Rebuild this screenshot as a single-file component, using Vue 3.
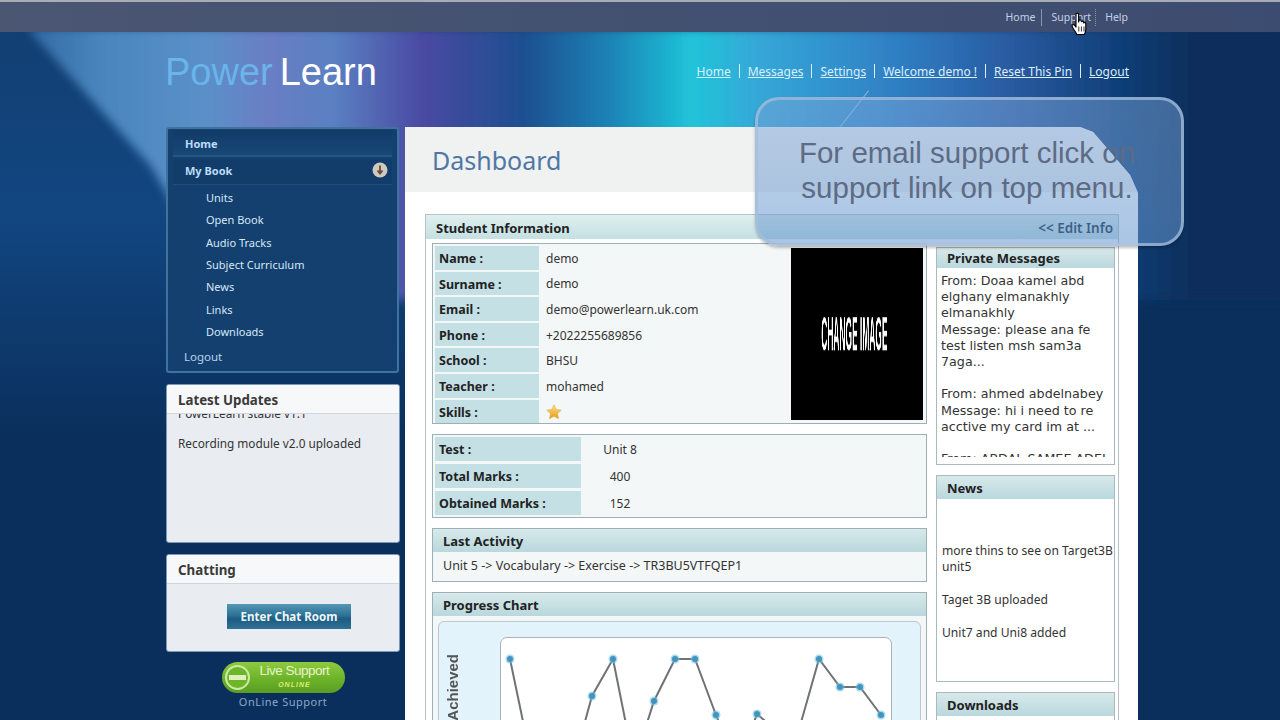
<script setup>
const topLinks = ['Home', 'Support', 'Help']
const mainLinks = ['Home', 'Messages', 'Settings', 'Welcome demo !', 'Reset This Pin', 'Logout']
const bookItems = ['Units', 'Open Book', 'Audio Tracks', 'Subject Curriculum', 'News', 'Links', 'Downloads']

const student = [
  ['Name :', 'demo'],
  ['Surname :', 'demo'],
  ['Email :', 'demo@powerlearn.uk.com'],
  ['Phone :', '+2022255689856'],
  ['School :', 'BHSU'],
  ['Teacher :', 'mohamed'],
]
const marks = [
  ['Test :', 'Unit 8'],
  ['Total Marks :', '400'],
  ['Obtained Marks :', '152'],
]

// chart points, relative to the white plot area
const points = [
  [10, 22], [30, 118], [51, 150], [72, 132], [92, 59], [113, 22], [134, 127], [154, 64], [175, 22], [195, 22],
  [216, 78], [237, 130], [257, 77], [278, 95], [298, 96], [319, 22], [340, 50], [360, 50], [381, 78],
]
const linePoints = points.map(p => p.join(',')).join(' ')
</script>

<template>
  <div class="page">
    <!-- header artwork of the site template -->
    <svg class="art" width="1280" height="720" viewBox="0 0 1280 720">
      <defs>
        <linearGradient id="sky" x1="0" y1="0" x2="1280" y2="0" gradientUnits="userSpaceOnUse">
          <stop offset="0" stop-color="#2a5f9a" />
          <stop offset=".08" stop-color="#4a86be" />
          <stop offset=".16" stop-color="#5a90c8" />
          <stop offset=".21" stop-color="#6a7ec4" />
          <stop offset=".26" stop-color="#5a80c2" />
          <stop offset=".33" stop-color="#4a4aa2" />
          <stop offset=".41" stop-color="#1d4f90" />
          <stop offset=".48" stop-color="#1c86b8" />
          <stop offset=".54" stop-color="#20c4d8" />
          <stop offset=".59" stop-color="#35a8d8" />
          <stop offset=".7" stop-color="#2f7fc4" />
          <stop offset=".79" stop-color="#2a5aa0" />
          <stop offset=".87" stop-color="#11407a" />
          <stop offset=".93" stop-color="#0a2f5c" />
        </linearGradient>
        <linearGradient id="ground" x1="0" y1="30" x2="0" y2="440" gradientUnits="userSpaceOnUse">
          <stop offset="0" stop-color="#123f73" />
          <stop offset=".45" stop-color="#124680" />
          <stop offset="1" stop-color="#0a2f5c" />
        </linearGradient>
        <filter id="soft" x="-5%" y="-5%" width="110%" height="110%">
          <feGaussianBlur stdDeviation="5" />
        </filter>
      </defs>
      <rect width="1280" height="720" fill="#0a2f5c" />
      <rect width="420" height="440" y="30" fill="url(#ground)" />
      <polygon points="27,28 1290,28 1290,300 230,300 150,165" fill="url(#sky)" filter="url(#soft)" />
    </svg>

    <div class="streak"></div>

    <div class="topbar">
      <template v-for="(link, i) in topLinks" :key="link">
        <span v-if="i" class="top-sep" :class="{ dotted: i === 2 }"></span>
        <a class="top-link">{{ link }}</a>
      </template>
    </div>

    <div class="wrap">
      <header class="header">
        <div class="logo"><span class="logo-a">Power</span><span class="logo-b">Learn</span></div>
        <nav class="main-nav">
          <template v-for="(link, i) in mainLinks" :key="link">
            <span v-if="i" class="nav-sep"></span>
            <a class="nav-link">{{ link }}</a>
          </template>
        </nav>
      </header>

      <div class="columns">
        <aside class="sidebar">
          <div class="menu">
            <div class="menu-head home">Home</div>
            <div class="menu-head book">
              My Book
              <span class="arrow">
                <svg width="16" height="16" viewBox="0 0 16 16">
                  <circle cx="8" cy="8" r="7.5" fill="#cfc9c0" />
                  <path d="M8 3.5v8M5.5 8.5 8 11.5l2.5-3" fill="none" stroke="#6b4a36" stroke-width="1.8" />
                </svg>
              </span>
            </div>
            <ul class="sub">
              <li v-for="item in bookItems" :key="item">{{ item }}</li>
            </ul>
            <div class="menu-logout">Logout</div>
          </div>

          <div class="side-card updates">
            <h3>Latest Updates</h3>
            <div class="side-body">
              <p class="cut">PowerLearn stable v1.1</p>
              <p>Recording module v2.0 uploaded</p>
            </div>
          </div>

          <div class="side-card chat">
            <h3>Chatting</h3>
            <div class="chat-body"><button class="chat-btn">Enter Chat Room</button></div>
          </div>

          <div class="live">
            <div class="pill">
              <span class="pill-icon"><i></i></span>
              <span class="pill-text">
                <b>Live Support</b>
                <em>ONLINE</em>
              </span>
            </div>
            <div class="live-cap">OnLine Support</div>
          </div>
        </aside>

        <main class="panel">
          <div class="panel-title"><h1>Dashboard</h1></div>

          <section class="outer">
            <div class="bar outer-bar">
              <span>Student Information</span>
              <a class="edit">&lt;&lt; Edit Info</a>
            </div>
            <div class="outer-cols">
              <div class="left">
                <div class="box info">
                  <div class="info-rows">
                    <div v-for="row in student" :key="row[0]" class="row">
                      <div class="lab">{{ row[0] }}</div>
                      <div class="val">{{ row[1] }}</div>
                    </div>
                    <div class="row">
                      <div class="lab">Skills :</div>
                      <div class="val">
                        <svg width="16" height="16" viewBox="0 0 16 16">
                          <defs>
                            <linearGradient id="star" x1="0" y1="0" x2="0" y2="1">
                              <stop offset="0" stop-color="#ffe27a" />
                              <stop offset="1" stop-color="#e79a1c" />
                            </linearGradient>
                          </defs>
                          <path d="M8 .8l2.2 4.7 5.1.6-3.8 3.5 1 5.1L8 12.2l-4.500 2.500 1-5.100L.7 6.100l5.100-.6z" fill="url(#star)" stroke="#d9a441" stroke-width=".5" />
                        </svg>
                      </div>
                    </div>
                  </div>
                  <div class="photo"><span>CHANGE IMAGE</span></div>
                </div>

                <div class="box marks">
                  <div v-for="row in marks" :key="row[0]" class="row">
                    <div class="lab">{{ row[0] }}</div>
                    <div class="val"><span>{{ row[1] }}</span></div>
                  </div>
                </div>

                <div class="box activity">
                  <div class="bar">Last Activity</div>
                  <div class="activity-text">Unit 5 -&gt; Vocabulary -&gt; Exercise -&gt; TR3BU5VTFQEP1</div>
                </div>

                <div class="box progress">
                  <div class="bar">Progress Chart</div>
                  <div class="chart">
                    <div class="axis">Achieved</div>
                    <div class="plot">
                      <svg width="392" height="200" viewBox="1 1 392 200">
                        <polyline :points="linePoints" fill="none" stroke="#6e7378" stroke-width="2" />
                        <g v-for="p in points" :key="p[0]">
                          <circle :cx="p[0]" :cy="p[1]" r="4.500" fill="#7cc0de" opacity=".6" />
                          <circle :cx="p[0]" :cy="p[1]" r="3" fill="#3f95bf" />
                        </g>
                      </svg>
                    </div>
                  </div>
                </div>
              </div>

              <div class="right">
                <div class="mini messages">
                  <div class="bar">Private Messages</div>
                  <div class="mini-body">
                    From: Doaa kamel abd elghany elmanakhly elmanakhly<br />
                    Message: please ana fe test listen msh sam3a 7aga...<br /><br />
                    From: ahmed abdelnabey<br />
                    Message: hi i need to re acctive my card im at ...<br /><br />
                    From: ABDAL SAMEE ADEL
                  </div>
                </div>
                <div class="mini news">
                  <div class="bar">News</div>
                  <div class="news-body">
                    <p>more thins to see on Target3B unit5</p>
                    <p>Taget 3B uploaded</p>
                    <p>Unit7 and Uni8 added</p>
                  </div>
                </div>
                <div class="mini downloads">
                  <div class="bar">Downloads</div>
                </div>
              </div>
            </div>
          </section>
        </main>
      </div>
    </div>

    <!-- help overlay from the recorded walkthrough -->
    <div class="callout">For email support click on<br />support link on top menu.</div>

    <svg class="cursor" width="18" height="26" viewBox="0 0 18 26">
      <path d="M5 2.500c0-1.800 2.600-1.800 2.600 0V10l.4-1.500c.6-1 2.200-.8 2.300.5l.1.800c.5-1 2.200-.8 2.300.5v.7c.6-.8 2.100-.5 2.100.8v5.400c0 2.500-1 3.500-1.300 5.300H5.700c-.5-2-2-3.500-3.500-6-1-1.600-1.500-3-.8-3.600.8-.7 2-.2 3.600 2.200z" fill="#fff" stroke="#000" stroke-width="1.100" stroke-linejoin="round" />
      <path d="M7.800 14.500v5M10.400 14.500v5M13 14.500v5" stroke="#000" stroke-width=".8" fill="none" />
    </svg>
  </div>
</template>

<style>
html, body {
  margin: 0;
  background: #0a2f5c;
}
</style>

<style scoped>
.page {
  position: relative;
  width: 1280px;
  height: 720px;
  overflow: hidden;
  font-family: "Noto Sans", "DejaVu Sans", sans-serif;
  font-size: 12px;
  color: #333;
  background: #0a2f5c;
}

.art {
  position: absolute;
  left: 0;
  top: 0;
}

.streak {
  position: absolute;
  left: 849px;
  top: 84px;
  width: 1px;
  height: 62px;
  background: rgba(255, 255, 255, .4);
  transform: rotate(38deg);
}

.topbar {
  position: relative;
  height: 30px;
  border-top: 2px solid #a9acb2;
  background: linear-gradient(90deg, #4a5672, #3c4c70);
  display: flex;
  align-items: center;
  justify-content: flex-end;
  padding-right: 152px;
  font-size: 10.500px;
  color: #c6d0e2;
}

.top-sep {
  width: 0;
  height: 17px;
  margin: 0 9px 0 6px;
  border-left: 1px solid rgba(255, 255, 255, .4);
}

.top-sep.dotted {
  margin: 0 9px 0 4px;
  border-left-style: dotted;
}

.wrap {
  position: relative;
  width: 973px;
  margin-left: 165px;
}

.header {
  height: 95px;
  display: flex;
  justify-content: space-between;
  align-items: flex-start;
  padding-right: 9px;
}

.logo {
  margin-top: 18px;
  font-family: "Liberation Sans", Arial, sans-serif;
  font-size: 38px;
  line-height: 44px;
}

.logo-a {
  color: #6ab4ea;
  margin-right: 7px;
}

.logo-b {
  color: #fff;
}

.main-nav {
  margin-top: 31px;
  display: flex;
  align-items: center;
  color: #d9f0ff;
}

.nav-link {
  text-decoration: underline;
  line-height: 18px;
}

.nav-sep {
  width: 1px;
  height: 14px;
  margin: 0 8px 2px;
  background: #dcecf8;
}

.columns {
  display: flex;
  gap: 5px;
  align-items: flex-start;
}

.sidebar {
  width: 234px;
  margin-left: 1px;
  flex: none;
}

.menu {
  width: 233px;
  height: 246px;
  box-sizing: border-box;
  border: 2px solid #3f729f;
  border-radius: 3px;
  background: #14406f;
  color: #d5e8f8;
  font-size: 11px;
}

.menu-head {
  font-weight: 700;
  color: #bcdcf6;
  margin: 0 5px 0 5px;
  padding-left: 12px;
  position: relative;
}

.home {
  height: 25px;
  line-height: 27px;
  margin-top: 1px;
  background: linear-gradient(#123b69, #174876);
  border-bottom: 2px solid #245684;
}

.book {
  height: 25px;
  line-height: 24px;
  margin-top: 2px;
  border-bottom: 1px solid #1d4e7e;
  background: #123d6b;
}

.arrow {
  position: absolute;
  right: 4px;
  top: 3px;
  line-height: 0;
}

.sub {
  list-style: none;
  margin: 2px 0 0;
  padding: 0 0 0 38px;
}

.sub li {
  height: 22.33px;
  line-height: 22.33px;
}

.menu-logout {
  margin: 3px 0 0 16px;
  line-height: 22px;
  font-size: 11.500px;
  color: #b4d4ee;
}

.side-card {
  margin-top: 11px;
  border: 1px solid #7b9ab8;
  border-radius: 3px;
  background: #e9edf1;
  box-sizing: border-box;
  overflow: hidden;
  width: 234px;
}

.side-card h3 {
  margin: 0;
  height: 28px;
  padding-left: 11px;
  font-size: 13.300px;
  line-height: 30px;
  font-weight: 700;
  color: #3a3a3a;
  background: #f7f8f9;
  border-bottom: 1px solid #d3d6da;
}

.updates {
  height: 159px;
}

.side-body {
  height: 125px;
  overflow: hidden;
  padding-left: 11px;
  color: #333;
  font-size: 11.800px;
}

.side-body p {
  margin: 0;
  line-height: 16px;
}

.side-body .cut {
  margin-top: -9px;
  margin-bottom: 14px;
}

.chat {
  height: 98px;
  margin-top: 11px;
}

.chat-body {
  padding: 20px 0 0 60px;
}

.chat-btn {
  display: block;
  width: 124px;
  height: 25px;
  border: 0;
  padding: 0;
  font: 700 11.500px "Noto Sans", sans-serif;
  color: #eef6fa;
  background: linear-gradient(#5596b4 0, #2c7397 45%, #1d5c82 60%, #2f7296 100%);
}

.live {
  margin-top: 10px;
  display: flex;
  flex-direction: column;
  align-items: center;
}

.pill {
  width: 123px;
  height: 31px;
  border-radius: 16px;
  background: linear-gradient(#8fca3e, #6fb52a 50%, #5a9d22);
  display: flex;
  align-items: center;
  padding-left: 3px;
  box-sizing: border-box;
}

.pill-icon {
  width: 25px;
  height: 25px;
  box-sizing: border-box;
  border: 2px solid #cfe8a6;
  border-radius: 50%;
  display: flex;
  align-items: center;
  justify-content: center;
  background: #6fb52a;
}

.pill-icon i {
  width: 17px;
  height: 5px;
  background: #dff0c0;
}

.pill-text {
  display: flex;
  flex-direction: column;
  align-items: center;
  margin-left: 10px;
  font-family: "Liberation Sans", sans-serif;
}

.pill-text b {
  font-weight: 400;
  font-size: 13.500px;
  line-height: 15px;
  margin-top: -3px;
  letter-spacing: -.5px;
  color: #e4f3cf;
}

.pill-text em {
  font-style: italic;
  font-weight: 700;
  font-size: 7px;
  line-height: 9px;
  margin-top: 2px;
  letter-spacing: 1px;
  color: #d8f06c;
}

.live-cap {
  margin-top: 1px;
  font-size: 11px;
  letter-spacing: .5px;
  line-height: 15px;
  color: #8aa8c8;
}

.panel {
  flex: 1;
  height: 600px;
  background: #fff;
  border-top-left-radius: 8px;
  clip-path: polygon(0 0, 675px 0, 688px 5px, 725px 48px, 733px 66px, 733px 100%, 0 100%);
}

.panel-title {
  height: 65px;
  background: #f0f1f1;
  padding-left: 27px;
}

.panel-title h1 {
  margin: 0;
  font-family: "Noto Sans", sans-serif;
  font-weight: 400;
  font-size: 25px;
  line-height: 67px;
  color: #4f77a6;
}

.outer {
  margin: 22px 0 0 20px;
  width: 694px;
  box-sizing: border-box;
  height: 520px;
  border: 1px solid #b5c3c9;
  border-bottom: 0;
}

.bar {
  height: 23px;
  line-height: 25px;
  padding-left: 10px;
  font-weight: 700;
  font-size: 13px;
  color: #222;
  background: linear-gradient(#d8e9ea, #b9d8dd);
}

.outer-bar {
  height: 24px;
  line-height: 27px;
  display: flex;
  justify-content: space-between;
  background: linear-gradient(#e0efef, #c4e0e2);
}

.edit {
  font-weight: 600;
  font-size: 13.500px;
  padding-right: 5px;
  color: #0e1c30;
}

.outer-cols {
  display: flex;
  align-items: flex-start;
  padding: 4px 0 0 6px;
}

.left {
  width: 495px;
  flex: none;
}

.right {
  width: 179px;
  margin: 4px 0 0 9px;
}

.box {
  box-sizing: border-box;
  border: 1px solid #9db0b6;
  background: #f4f7f7;
}

.info {
  height: 181px;
  display: flex;
  padding: 2px 3px 2px 2px;
}

.info-rows {
  width: 353px;
  flex: none;
  display: flex;
  flex-direction: column;
  gap: 2px;
}

.row {
  display: flex;
  height: 23.600px;
  line-height: 26px;
}

.lab {
  flex: none;
  width: 104px;
  padding-left: 4px;
  box-sizing: border-box;
  font-weight: 700;
  font-size: 12.500px;
  color: #222;
  background: #c5e0e5;
}

.val {
  flex: 1;
  padding: 2px 0 0 7px;
  display: flex;
  align-items: center;
  color: #333;
}

.photo {
  width: 132px;
  height: 172px;
  margin: 2px 0 0 3px;
  background: #000;
  display: flex;
  align-items: center;
  justify-content: center;
  overflow: hidden;
}

.photo span {
  color: #fff;
  font: 700 30px "Liberation Sans", sans-serif;
  white-space: nowrap;
  transform: translateX(-3px) scale(.28, 1.6);
  will-change: transform;
}

.marks {
  height: 84px;
  margin-top: 10px;
  padding: 2px 3px 2px 2px;
  display: flex;
  flex-direction: column;
  gap: 3px;
}

.marks .row {
  height: 24px;
}

.marks .lab {
  width: 146px;
}

.marks .val {
  padding-left: 2px;
}

.marks .val span {
  width: 74px;
  text-align: center;
}

.activity {
  margin-top: 10px;
  height: 54px;
}

.activity-text {
  padding-left: 10px;
  line-height: 28px;
  font-size: 12.500px;
}

.progress {
  margin-top: 10px;
  height: 300px;
}

.chart {
  margin: 5px 5px 0;
  height: 260px;
  box-sizing: border-box;
  border: 1px solid #bcc8cc;
  border-radius: 6px;
  background: #e3f3fb;
  padding: 15px 0 0 0;
  display: flex;
  align-items: flex-start;
}

.axis {
  flex: none;
  width: 27px;
  margin: 17px 34px 0 0;
  writing-mode: vertical-rl;
  transform: rotate(180deg);
  font: 700 15px/27px "Liberation Sans", sans-serif;
  color: #555;
}

.plot {
  width: 392px;
  height: 220px;
  background: #fff;
  border: 1px solid #aab4b8;
  border-radius: 7px;
  box-sizing: border-box;
  line-height: 0;
}

.mini {
  box-sizing: border-box;
  border: 1px solid #a9babf;
  margin-bottom: 10px;
}

.mini .bar {
  padding-left: 10px;
}

.messages {
  height: 218px;
}

.messages .bar {
  height: 20px;
  line-height: 20px;
}

.mini-body {
  height: 184px;
  overflow: hidden;
  margin-top: 5px;
  padding: 0 4px;
  font-family: "DejaVu Sans", sans-serif;
  font-size: 12.700px;
  line-height: 16.200px;
  color: #333;
}

.news {
  height: 207px;
}

.news .bar {
  line-height: 25px;
}

.news-body {
  padding: 44px 0 0 5px;
  font-size: 12.100px;
}

.news-body p {
  margin: 0 0 17px;
  line-height: 16px;
  color: #333;
}

.downloads {
  height: 60px;
}

.downloads .bar {
  line-height: 24px;
}

.callout {
  position: absolute;
  left: 755px;
  top: 97px;
  width: 429px;
  height: 149px;
  box-sizing: border-box;
  border: 3px solid rgba(165, 190, 220, .75);
  border-radius: 24px;
  background: linear-gradient(rgba(125, 165, 215, .48), rgba(100, 150, 205, .55));
  box-shadow: 0 2px 3px rgba(0, 0, 0, .25);
  padding: 35px 5px 0 0;
  text-align: center;
  font-family: "Liberation Sans", sans-serif;
  font-size: 29.500px;
  line-height: 35px;
  white-space: nowrap;
  color: #5d6b84;
}

.cursor {
  position: absolute;
  left: 1071px;
  top: 12px;
}
</style>
